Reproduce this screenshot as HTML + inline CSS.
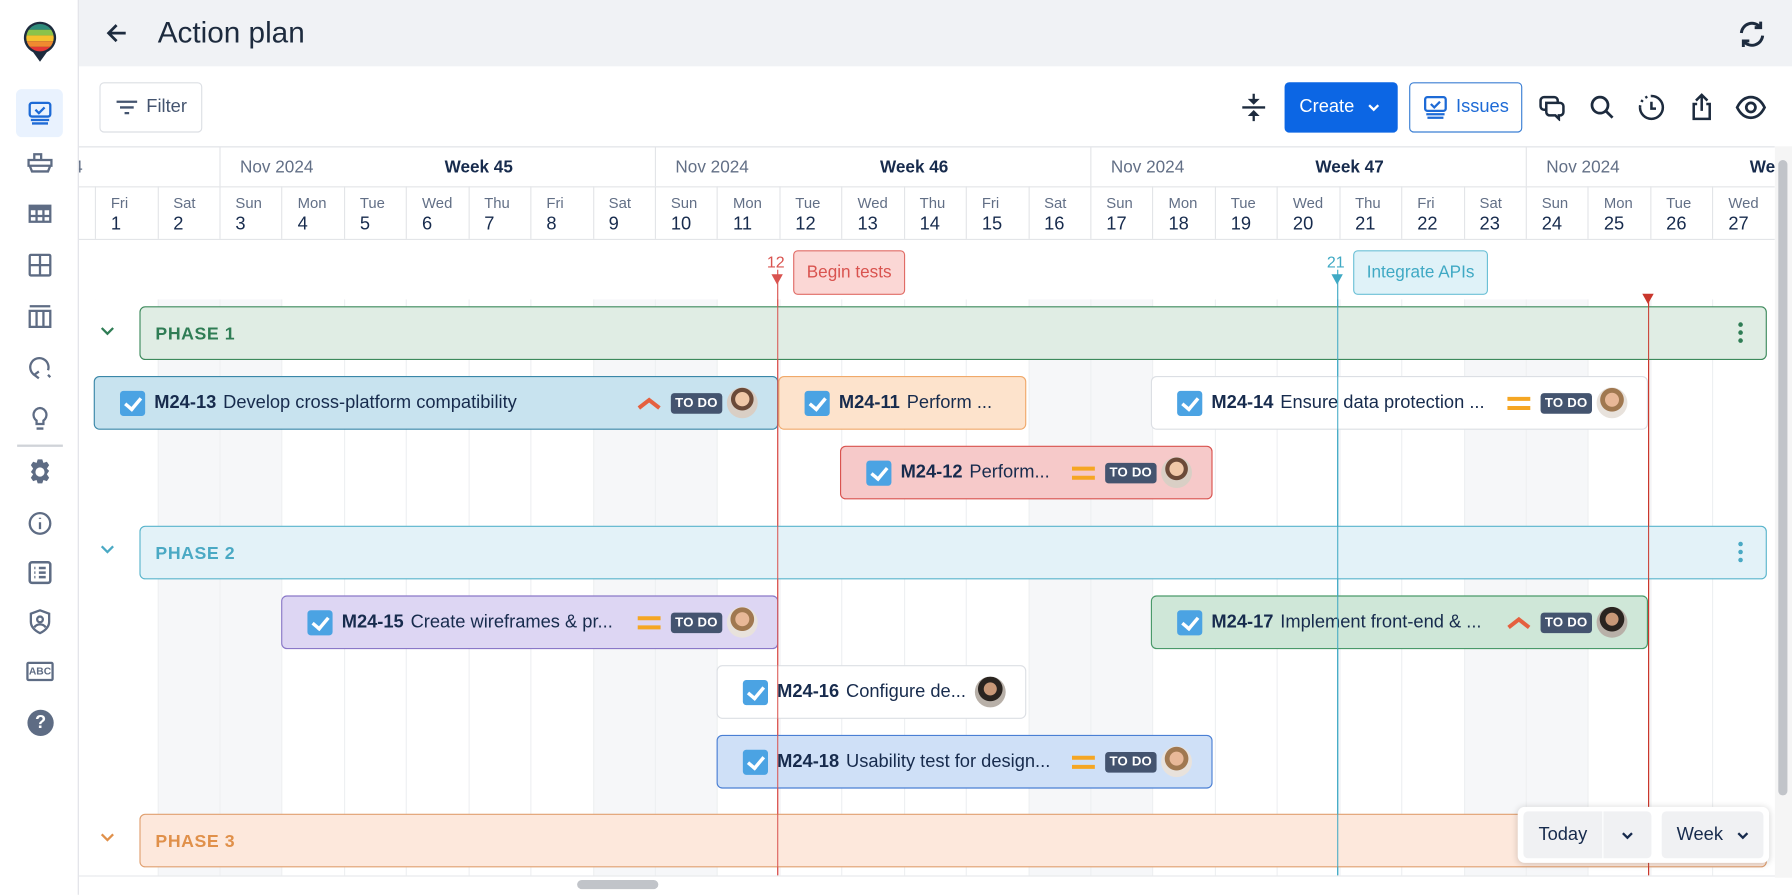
<!DOCTYPE html>
<html><head><meta charset="utf-8">
<style>
*{box-sizing:border-box;margin:0;padding:0}
html,body{width:1792px;height:894px;overflow:hidden;background:#fff;font-family:"Liberation Sans",sans-serif;color:#172b4d}
#w{position:absolute;left:0;top:0;width:1568px;height:783px;transform:scale(1.142857);transform-origin:0 0;overflow:hidden;background:#fff}
.a{position:absolute}
.sb{left:0;top:0;width:69px;height:783px;background:#fff;border-right:1px solid #dfe1e6}
.ic{position:absolute;left:23px;width:24px;height:24px}
.top{left:69px;top:0;width:1499px;height:58px;background:#f0f2f5}
.dh{position:absolute;top:163px;height:46px;border-left:1px solid #e3e5e8;font-size:13px;color:#626f86;padding:7px 0 0 13px;line-height:15px}
.dh b{display:block;font-weight:normal;font-size:16px;color:#172b4d;margin-top:3px;line-height:18px}
.col{position:absolute;top:262px;height:504px;border-left:1px solid #eef0f2}
.we{background:#f6f7f9}
.task{position:absolute;height:47px;border-radius:5px;border:1px solid;display:flex;align-items:center;font-size:16px;white-space:nowrap;overflow:hidden}
.cb{width:22px;height:22px;border-radius:3px;background:#4ba3e3;margin:0 8px 0 22px;flex:none;position:relative}
.cb:after{content:"";position:absolute;left:7px;top:3px;width:6px;height:11px;border:solid #fff;border-width:0 3px 3px 0;transform:rotate(40deg)}
.k{font-weight:bold;margin-right:6px}
.td{background:#44546f;color:#fff;font-weight:bold;font-size:11.5px;padding:3px 4px;border-radius:3px;letter-spacing:.2px;flex:none}
.av{width:27px;height:27px;border-radius:50%;margin-left:4px;flex:none;background:radial-gradient(circle at 50% 38%,#f0c8a8 0 28%,#6b4a38 30% 45%,#d9cfc5 47%)}
.av2{background:radial-gradient(circle at 50% 40%,#e8b898 0 28%,#a07850 30% 48%,#e8e2dc 50%)}
.av3{background:radial-gradient(circle at 50% 40%,#c89878 0 26%,#2a2420 28% 50%,#b8b0a8 52%)}
.pr{flex:none;margin-right:8px}
.sp{flex:1}
.ph{position:absolute;left:122px;width:1424px;height:47px;border:1px solid;border-radius:5px;font-weight:bold;font-size:15.5px;letter-spacing:.5px;padding:15px 0 0 13px}
.chev{position:absolute;left:88px;width:12px;height:12px}
.dots{position:absolute;right:20px;top:13px;width:4px}
.dots i{display:block;width:4px;height:4px;border-radius:50%;margin-bottom:3px}
.tb{position:absolute;top:72px;height:44px;border-radius:4px;display:flex;align-items:center;font-size:16px}
.hd{position:absolute;left:0;top:0;width:1553px;height:262px;overflow:hidden;white-space:nowrap}
</style></head><body><div id="w">

<!-- top bar -->
<div class="a top"></div>
<svg class="a" style="left:92px;top:18px" width="22" height="22" viewBox="0 0 22 22"><path d="M18 11H4M10 4l-7 7 7 7" stroke="#1d2b3e" stroke-width="2.4" fill="none"/></svg>
<div class="a" style="left:138px;top:13px;font-size:26px;color:#1d2b3e">Action plan</div>
<svg class="a" style="left:1519px;top:16px" width="28" height="28" viewBox="0 0 24 24" fill="none" stroke="#1d2b3e" stroke-width="2.2"><path d="M4 11a8 8 0 0 1 14-4.5M20 13a8 8 0 0 1-14 4.5"/><path d="M18.5 2.5v4.5h-4.5M5.5 21.5v-4.5h4.5"/></svg>

<!-- toolbar -->
<div class="tb" style="left:87px;width:90px;border:1px solid #dcdfe4;padding-left:13px;color:#44546f"><svg width="20" height="16" viewBox="0 0 20 16"><path d="M1 3h18M4 8h12M8 13h4" stroke="#44546f" stroke-width="2"/></svg><span style="margin-left:7px">Filter</span></div>
<svg class="a" style="left:1086px;top:80px" width="22" height="28" viewBox="0 0 22 28" stroke="#1d2b3e" stroke-width="2" fill="#1d2b3e"><path d="M1 14h20" /><path d="M11 2v8M11 26v-8"/><path d="M7 7l4 4 4-4z M7 21l4-4 4 4z" stroke-width="1"/></svg>
<div class="tb" style="left:1124px;width:99px;background:#0c66e4;color:#fff;padding-left:13px">Create<svg style="margin-left:12px" width="10" height="8" viewBox="0 0 10 8"><path d="M1 2l4 4 4-4" stroke="#fff" stroke-width="2" fill="none"/></svg></div>
<div class="tb" style="left:1233px;width:99px;border:1px solid #3b7fd4;color:#1d6ad6;padding-left:11px"><svg width="22" height="22" viewBox="0 0 22 22" fill="none" stroke="#1d6ad6" stroke-width="2"><rect x="2" y="2" width="18" height="12" rx="2"/><path d="M7 8l3 3 5-5M3 17h16M4 20h14"/></svg><span style="margin-left:7px">Issues</span></div>
<svg class="a" style="left:1346px;top:82px" width="24" height="24" viewBox="0 0 24 24" fill="none" stroke="#1d2b3e" stroke-width="2.2"><rect x="2" y="3" width="15" height="11" rx="3"/><path d="M7 8h12a3 3 0 0 1 3 3v5a3 3 0 0 1-3 3h-1v3l-3-3H10a3 3 0 0 1-3-3z" fill="#fff"/></svg>
<svg class="a" style="left:1390px;top:82px" width="24" height="24" viewBox="0 0 24 24" fill="none" stroke="#1d2b3e" stroke-width="2.4"><circle cx="10" cy="10" r="7"/><path d="M15 15l6 6"/></svg>
<svg class="a" style="left:1433px;top:82px" width="24" height="24" viewBox="0 0 24 24" fill="none" stroke="#1d2b3e" stroke-width="2.2"><path d="M12 2a10 10 0 1 1-10 10" /><path d="M2 12a10 10 0 0 1 10-10" stroke-dasharray="2 3"/><path d="M12 7v6h4"/></svg>
<svg class="a" style="left:1477px;top:81px" width="24" height="26" viewBox="0 0 24 26" fill="none" stroke="#1d2b3e" stroke-width="2.2"><path d="M8 10H5v13h14V10h-3M12 16V2M7 7l5-5 5 5"/></svg>
<svg class="a" style="left:1518px;top:82px" width="28" height="24" viewBox="0 0 28 24" fill="none" stroke="#1d2b3e" stroke-width="2.4"><path d="M2 12C5 6 9 3 14 3s9 3 12 9c-3 6-7 9-12 9S5 18 2 12z"/><circle cx="14" cy="12" r="4"/></svg>

<div class="hd">
<div class="a" style="left:69px;top:128px;width:1484px;height:1px;background:#dfe1e6"></div>
<div class="a" style="left:69px;top:163px;width:1484px;height:1px;background:#e3e5e8"></div>
<div class="a" style="left:69px;top:209px;width:1484px;height:1px;background:#e3e5e8"></div>
<div class="a" style="left:64px;top:138px;font-size:15px;color:#626f86">4</div>
<div class="a" style="left:192px;top:129px;width:1px;height:34px;background:#e3e5e8"></div>
<div class="a" style="left:573px;top:129px;width:1px;height:34px;background:#e3e5e8"></div>
<div class="a" style="left:954px;top:129px;width:1px;height:34px;background:#e3e5e8"></div>
<div class="a" style="left:1335px;top:129px;width:1px;height:34px;background:#e3e5e8"></div>
<div class="a" style="left:210px;top:138px;font-size:15px;color:#626f86">Nov 2024</div>
<div class="a" style="left:389px;top:138px;font-size:15px;font-weight:bold">Week 45</div>
<div class="a" style="left:591px;top:138px;font-size:15px;color:#626f86">Nov 2024</div>
<div class="a" style="left:770px;top:138px;font-size:15px;font-weight:bold">Week 46</div>
<div class="a" style="left:972px;top:138px;font-size:15px;color:#626f86">Nov 2024</div>
<div class="a" style="left:1151px;top:138px;font-size:15px;font-weight:bold">Week 47</div>
<div class="a" style="left:1353px;top:138px;font-size:15px;color:#626f86">Nov 2024</div>
<div class="a" style="left:1531px;top:138px;font-size:15px;font-weight:bold;white-space:nowrap">Week 48</div>

<div class="dh" style="left:83px">Fri<b>1</b></div>
<div class="dh" style="left:137.6px">Sat<b>2</b></div>
<div class="dh" style="left:192px">Sun<b>3</b></div>
<div class="dh" style="left:246.4px">Mon<b>4</b></div>
<div class="dh" style="left:300.9px">Tue<b>5</b></div>
<div class="dh" style="left:355.3px">Wed<b>6</b></div>
<div class="dh" style="left:409.7px">Thu<b>7</b></div>
<div class="dh" style="left:464.1px">Fri<b>8</b></div>
<div class="dh" style="left:518.6px">Sat<b>9</b></div>
<div class="dh" style="left:573px">Sun<b>10</b></div>
<div class="dh" style="left:627.4px">Mon<b>11</b></div>
<div class="dh" style="left:681.9px">Tue<b>12</b></div>
<div class="dh" style="left:736.3px">Wed<b>13</b></div>
<div class="dh" style="left:790.7px">Thu<b>14</b></div>
<div class="dh" style="left:845.1px">Fri<b>15</b></div>
<div class="dh" style="left:899.6px">Sat<b>16</b></div>
<div class="dh" style="left:954px">Sun<b>17</b></div>
<div class="dh" style="left:1008.4px">Mon<b>18</b></div>
<div class="dh" style="left:1062.9px">Tue<b>19</b></div>
<div class="dh" style="left:1117.3px">Wed<b>20</b></div>
<div class="dh" style="left:1171.7px">Thu<b>21</b></div>
<div class="dh" style="left:1226.1px">Fri<b>22</b></div>
<div class="dh" style="left:1280.6px">Sat<b>23</b></div>
<div class="dh" style="left:1335px">Sun<b>24</b></div>
<div class="dh" style="left:1389.4px">Mon<b>25</b></div>
<div class="dh" style="left:1443.9px">Tue<b>26</b></div>
<div class="dh" style="left:1498.3px">Wed<b>27</b></div>
</div>

<!-- grid -->
<div class="col" style="left:83px;width:55px"></div>
<div class="col we" style="left:137.6px;width:55px"></div>
<div class="col we" style="left:192px;width:55px"></div>
<div class="col" style="left:246.4px;width:55px"></div>
<div class="col" style="left:300.9px;width:55px"></div>
<div class="col" style="left:355.3px;width:55px"></div>
<div class="col" style="left:409.7px;width:55px"></div>
<div class="col" style="left:464.1px;width:55px"></div>
<div class="col we" style="left:518.6px;width:55px"></div>
<div class="col we" style="left:573px;width:55px"></div>
<div class="col" style="left:627.4px;width:55px"></div>
<div class="col" style="left:681.9px;width:55px"></div>
<div class="col" style="left:736.3px;width:55px"></div>
<div class="col" style="left:790.7px;width:55px"></div>
<div class="col" style="left:845.1px;width:55px"></div>
<div class="col we" style="left:899.6px;width:55px"></div>
<div class="col we" style="left:954px;width:55px"></div>
<div class="col" style="left:1008.4px;width:55px"></div>
<div class="col" style="left:1062.9px;width:55px"></div>
<div class="col" style="left:1117.3px;width:55px"></div>
<div class="col" style="left:1171.7px;width:55px"></div>
<div class="col" style="left:1226.1px;width:55px"></div>
<div class="col we" style="left:1280.6px;width:55px"></div>
<div class="col we" style="left:1335px;width:55px"></div>
<div class="col" style="left:1389.4px;width:55px"></div>
<div class="col" style="left:1443.9px;width:55px"></div>
<div class="col" style="left:1498.3px;width:55px"></div>
<div class="a" style="left:69px;top:262px;width:53px;height:504px;background:#fff"></div>

<!-- milestones -->
<div class="a" style="left:680px;top:236px;width:1px;height:530px;background:#d9534f"></div>
<div class="a" style="left:1170px;top:236px;width:1px;height:530px;background:#3fa9c4"></div>
<div class="a" style="left:1442px;top:258px;width:1px;height:508px;background:#c9372c"></div>
<div class="a" style="left:671px;top:221px;font-size:14px;color:#d9534f">12</div>
<div class="a" style="left:675px;top:240px;border:5px solid transparent;border-top:9px solid #d9534f"></div>
<div class="a" style="left:1161px;top:221px;font-size:14px;color:#3fa9c4">21</div>
<div class="a" style="left:1165px;top:240px;border:5px solid transparent;border-top:9px solid #3fa9c4"></div>
<div class="a" style="left:1437px;top:257px;border:5px solid transparent;border-top:9px solid #c9372c"></div>
<div class="a" style="left:694px;top:219px;width:98px;height:39px;background:#fbd7d5;border:1px solid #e06c66;border-radius:4px;color:#d9534f;font-size:15px;text-align:center;line-height:37px">Begin tests</div>
<div class="a" style="left:1184px;top:219px;width:118px;height:39px;background:#dff2f8;border:1px solid #6cc0d6;border-radius:4px;color:#3fa9c4;font-size:15px;text-align:center;line-height:37px">Integrate APIs</div>

<!-- phase 1 -->
<svg class="chev" style="top:284px" viewBox="0 0 12 12"><path d="M1 3l5 5 5-5" stroke="#2f7d55" stroke-width="2" fill="none"/></svg>
<div class="ph" style="top:268px;background:#e0ede4;border-color:#3d8a5c;color:#2f7d55">PHASE 1<div class="dots"><i style="background:#2f7d55"></i><i style="background:#2f7d55"></i><i style="background:#2f7d55"></i></div></div>

<div class="task" style="left:82px;top:329px;width:599px;background:#c8e3ef;border-color:#3a87a8"><div class="cb"></div><span class="k">M24-13</span>Develop cross-platform compatibility<span class="sp"></span><svg class="pr" width="22" height="12" viewBox="0 0 22 12"><path d="M2 10l9-7 9 7" stroke="#e5603f" stroke-width="3.5" fill="none"/></svg><span class="td">TO DO</span><span class="av" style="margin-right:17px"></span></div>
<div class="task" style="left:681px;top:329px;width:217px;background:#fde3cc;border-color:#f0a96a"><div class="cb"></div><span class="k">M24-11</span>Perform ...</div>
<div class="task" style="left:1007px;top:329px;width:435px;background:#fff;border-color:#dcdfe4"><div class="cb"></div><span class="k">M24-14</span>Ensure data protection ...<span class="sp"></span><svg class="pr" width="22" height="16" viewBox="0 0 22 16"><path d="M1 4h20M1 12h20" stroke="#f5a623" stroke-width="3.5"/></svg><span class="td">TO DO</span><span class="av av2" style="margin-right:17px"></span></div>
<div class="task" style="left:735px;top:390px;width:326px;background:#f6c9c9;border-color:#d9534f"><div class="cb"></div><span class="k">M24-12</span>Perform...<span class="sp"></span><svg class="pr" width="22" height="16" viewBox="0 0 22 16"><path d="M1 4h20M1 12h20" stroke="#f5a623" stroke-width="3.5"/></svg><span class="td">TO DO</span><span class="av" style="margin-right:17px"></span></div>

<!-- phase 2 -->
<svg class="chev" style="top:475px" viewBox="0 0 12 12"><path d="M1 3l5 5 5-5" stroke="#4aa9c4" stroke-width="2" fill="none"/></svg>
<div class="ph" style="top:460px;background:#e3f2f8;border-color:#5ab5cc;color:#4aa9c4">PHASE 2<div class="dots"><i style="background:#4aa9c4"></i><i style="background:#4aa9c4"></i><i style="background:#4aa9c4"></i></div></div>

<div class="task" style="left:246px;top:521px;width:435px;background:#ddd6f3;border-color:#8a78c8"><div class="cb"></div><span class="k">M24-15</span>Create wireframes &amp; pr...<span class="sp"></span><svg class="pr" width="22" height="16" viewBox="0 0 22 16"><path d="M1 4h20M1 12h20" stroke="#f5a623" stroke-width="3.5"/></svg><span class="td">TO DO</span><span class="av av2" style="margin-right:17px"></span></div>
<div class="task" style="left:1007px;top:521px;width:435px;background:#cfe7d8;border-color:#4a9a6a"><div class="cb"></div><span class="k">M24-17</span>Implement front-end &amp; ...<span class="sp"></span><svg class="pr" width="22" height="12" viewBox="0 0 22 12"><path d="M2 10l9-7 9 7" stroke="#e5603f" stroke-width="3.5" fill="none"/></svg><span class="td">TO DO</span><span class="av av3" style="margin-right:17px"></span></div>
<div class="task" style="left:627px;top:582px;width:271px;background:#fff;border-color:#dcdfe4"><div class="cb"></div><span class="k">M24-16</span>Configure de...<span class="sp"></span><span class="av av3" style="margin-right:17px"></span></div>
<div class="task" style="left:627px;top:643px;width:434px;background:#cfe0f7;border-color:#4a7fd4"><div class="cb"></div><span class="k">M24-18</span>Usability test for design...<span class="sp"></span><svg class="pr" width="22" height="16" viewBox="0 0 22 16"><path d="M1 4h20M1 12h20" stroke="#f5a623" stroke-width="3.5"/></svg><span class="td">TO DO</span><span class="av av2" style="margin-right:17px"></span></div>

<!-- phase 3 -->
<svg class="chev" style="top:727px" viewBox="0 0 12 12"><path d="M1 3l5 5 5-5" stroke="#e0904a" stroke-width="2" fill="none"/></svg>
<div class="ph" style="top:712px;background:#fde8dc;border-color:#e0a070;color:#e0904a">PHASE 3</div>

<!-- lines over -->
<div class="a" style="left:680px;top:262px;width:1px;height:504px;background:#d9534f;opacity:.9"></div>
<div class="a" style="left:1170px;top:262px;width:1px;height:504px;background:#3fa9c4;opacity:.9"></div>
<div class="a" style="left:1442px;top:262px;width:1px;height:504px;background:#c9372c;opacity:.9"></div>

<!-- popup -->
<div class="a" style="left:1328px;top:706px;width:220px;height:49px;background:#fff;border-radius:6px;box-shadow:0 1px 6px rgba(0,0,0,.18)"></div>
<div class="a" style="left:1333px;top:710px;width:69px;height:41px;background:#f0f1f3;border-radius:4px 0 0 4px;font-size:16px;text-align:center;line-height:41px">Today</div>
<div class="a" style="left:1403px;top:710px;width:42px;height:41px;background:#f0f1f3;border-radius:0 4px 4px 0"><svg style="margin:17px 0 0 16px" width="10" height="8" viewBox="0 0 10 8"><path d="M1 2l4 4 4-4" stroke="#172b4d" stroke-width="2" fill="none"/></svg></div>
<div class="a" style="left:1454px;top:710px;width:89px;height:41px;background:#f0f1f3;border-radius:4px;font-size:16px;line-height:41px;padding-left:13px">Week<svg style="margin-left:12px" width="10" height="8" viewBox="0 0 10 8"><path d="M1 2l4 4 4-4" stroke="#172b4d" stroke-width="2" fill="none"/></svg></div>

<!-- scrollbars -->
<div class="a" style="left:69px;top:766px;width:1499px;height:17px;background:#fff;border-top:1px solid #e6e8eb"></div>
<div class="a" style="left:505px;top:770px;width:71px;height:8px;border-radius:4px;background:#c1c4c9"></div>
<div class="a" style="left:1553px;top:128px;width:15px;height:640px;background:#f5f5f5"></div>
<div class="a" style="left:1556px;top:140px;width:8px;height:556px;border-radius:4px;background:#c1c4c9"></div>

<!-- sidebar -->
<div class="a sb"></div>
<svg class="a" style="left:20px;top:18px" width="30" height="38" viewBox="0 0 30 38"><defs><clipPath id="c"><circle cx="15" cy="15" r="12"/></clipPath></defs><path d="M15 1a14 14 0 0 1 6 26.7L15 36l-6-8.3A14 14 0 0 1 15 1z" fill="#1d2b3e"/><g clip-path="url(#c)"><rect x="0" y="2" width="30" height="6" fill="#2e8b7a"/><rect x="0" y="8" width="30" height="5" fill="#8bc34a"/><rect x="0" y="13" width="30" height="5" fill="#f5c12e"/><rect x="0" y="18" width="30" height="5" fill="#f08a30"/><rect x="0" y="23" width="30" height="5" fill="#e53935"/></g></svg>
<div class="a" style="left:14px;top:78px;width:41px;height:42px;background:#e9f2fe;border-radius:5px"></div>
<svg class="ic" style="top:87px" viewBox="0 0 24 24" fill="none" stroke="#1d6ad6" stroke-width="2"><rect x="3" y="3" width="18" height="12" rx="2"/><path d="M8 9l3 3 5-5M4 18h16M5 21h14"/></svg>
<svg class="ic" style="top:131px" viewBox="0 0 24 24" fill="none" stroke="#5e6c84" stroke-width="2"><path d="M7 9V4h6v5M2 9h20v5H2zM3 14l2 5h14l2-5"/></svg>
<svg class="ic" style="top:175px" viewBox="0 0 24 24" fill="#5e6c84"><path d="M2 4h20v16H2z"/><path d="M4 9h4v4H4zM10 9h4v4h-4zM16 9h4v4h-4zM4 15h4v3H4zM10 15h4v3h-4zM16 15h4v3h-4z" fill="#fff"/></svg>
<svg class="ic" style="top:220px" viewBox="0 0 24 24" fill="none" stroke="#5e6c84" stroke-width="2"><rect x="3" y="3" width="18" height="18" rx="1"/><path d="M12 3v18M3 12h18"/></svg>
<svg class="ic" style="top:265px" viewBox="0 0 24 24" fill="none" stroke="#5e6c84" stroke-width="2"><path d="M3 3h18M3 7h18v14H3zM9 7v14M15 7v14"/></svg>
<svg class="ic" style="top:309px" viewBox="0 0 24 24" fill="none" stroke="#5e6c84" stroke-width="2"><path d="M19 15a8 8 0 1 0-12 4"/><path d="M11 22l-4-3 4-3M19 19l2 2"/></svg>
<svg class="ic" style="top:354px" viewBox="0 0 24 24" fill="none" stroke="#5e6c84" stroke-width="2"><path d="M12 3a6 6 0 0 0-3 11v3h6v-3a6 6 0 0 0-3-11zM9 21h6"/></svg>
<div class="a" style="left:15px;top:389px;width:40px;height:2px;background:#d0d3d8"></div>
<svg class="ic" style="top:401px" viewBox="0 0 24 24" fill="#5e6c84"><path d="M10 1h4l1 3 3-1 2 3-2 3 2 2-2 3 2 3-2 3-3-1-1 3h-4l-1-3-3 1-2-3 2-3-2-2 2-3-2-3 2-3 3 1z"/><circle cx="12" cy="12" r="4" fill="#fff"/></svg>
<svg class="ic" style="top:446px" viewBox="0 0 24 24" fill="none" stroke="#5e6c84" stroke-width="2"><circle cx="12" cy="12" r="9"/><path d="M12 11v6M12 7v1"/></svg>
<svg class="ic" style="top:489px" viewBox="0 0 24 24" fill="none" stroke="#5e6c84" stroke-width="2.2"><rect x="3" y="3" width="18" height="18" rx="2"/><path d="M7 8h1M11 8h6M7 12h1M11 12h6M7 16h1M11 16h6"/></svg>
<svg class="ic" style="top:532px" viewBox="0 0 24 24" fill="none" stroke="#5e6c84" stroke-width="2"><path d="M12 2l8 3v7c0 5-4 8-8 10-4-2-8-5-8-10V5z"/><circle cx="12" cy="10" r="2.5"/><path d="M7 17a6 6 0 0 1 10 0"/></svg>
<div class="a" style="left:23px;top:579px;width:24px;height:17px;border:2px solid #5e6c84;border-radius:2px;font-size:9px;font-weight:bold;color:#5e6c84;text-align:center;line-height:13px">ABC</div>
<div class="a" style="left:24px;top:621px;width:23px;height:23px;border-radius:50%;background:#5e6c84;color:#fff;font-weight:bold;font-size:16px;text-align:center;line-height:23px">?</div>

</div></body></html>
